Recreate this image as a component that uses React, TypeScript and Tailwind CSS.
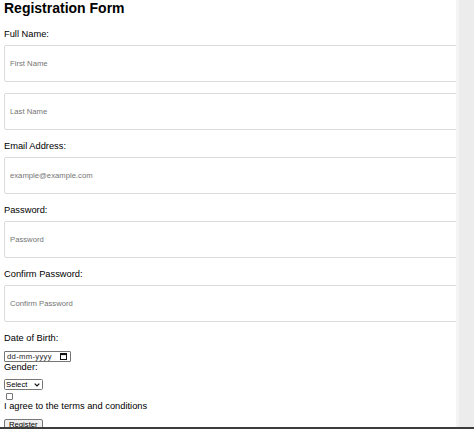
import { useState } from 'react';

const field =
  'block w-[470px] shrink-0 h-[37px] mb-[11px] pl-[5px] border border-[#dcdcdc] rounded-[2px] bg-white text-[7.7px] text-black placeholder:text-[#757575] outline-none';
const label = 'block text-[9.3px] leading-[11px] mb-[5px] text-black';

function CalendarIcon() {
  return (
    <svg width="7" height="7" viewBox="0 0 7 7" className="shrink-0">
      <rect x="0.5" y="0.5" width="6" height="6" fill="none" stroke="#111" strokeWidth="1" />
      <rect x="0.5" y="0.5" width="6" height="1.6" fill="#111" />
    </svg>
  );
}

export default function App() {
  const [agree, setAgree] = useState(false);

  return (
    <div className="w-[474px] h-[429px] flex flex-col overflow-hidden bg-white font-['Liberation_Sans',Arial,sans-serif]">
      <div className="flex h-[427px] overflow-hidden">
        <form
          className="flex-1 min-w-0 flex flex-col items-start overflow-hidden pl-[4px]"
          onSubmit={(e) => e.preventDefault()}
        >
          <h2 className="text-[14px] leading-[16px] font-bold text-black mb-[13px]">Registration Form</h2>

          <label className={label}>Full Name:</label>
          <input className={field} type="text" placeholder="First Name" />
          <input className={field} type="text" placeholder="Last Name" />

          <label className={label}>Email Address:</label>
          <input className={field} type="email" placeholder="example@example.com" />

          <label className={label}>Password:</label>
          <input className={field} type="password" placeholder="Password" />

          <label className={label}>Confirm Password:</label>
          <input className={field} type="password" placeholder="Confirm Password" />

          <label className={label}>Date of Birth:</label>
          <div className="mt-[2px] w-[67px] h-[11px] shrink-0 flex items-center justify-between pl-[2px] pr-[3px] border border-[#767676] rounded-[1px] text-[7.7px] leading-none text-[#222]">
            <span className="whitespace-nowrap tracking-[0.3px]">dd-mm-yyyy</span>
            <CalendarIcon />
          </div>

          <label className={label}>Gender:</label>
          <div className="relative mt-[1px] w-[39px] h-[11px] shrink-0">
            <select className="block w-full h-full appearance-none pl-[1px] border border-[#767676] rounded-[1.5px] bg-white text-[7.7px] leading-none text-black outline-none">
              <option>Select</option>
              <option>Male</option>
              <option>Female</option>
              <option>Other</option>
            </select>
            <svg
              width="6"
              height="4"
              viewBox="0 0 6 4"
              className="absolute right-[3px] top-[3.5px] pointer-events-none"
            >
              <path d="M0.7 0.7 L3 3 L5.3 0.7" fill="none" stroke="#111" strokeWidth="1.2" />
            </svg>
          </div>

          <input
            type="checkbox"
            checked={agree}
            onChange={(e) => setAgree(e.target.checked)}
            className="block shrink-0 appearance-none m-0 ml-[2px] mt-[3px] mb-[1px] w-[7px] h-[7px] border border-[#767676] rounded-[1px] bg-white checked:bg-[#0075ff] checked:border-[#0075ff]"
          />
          <label className={label}>I agree to the terms and conditions</label>

          <button
            type="submit"
            className="block shrink-0 mt-[2px] h-[12px] px-[4px] border border-[#767676] rounded-[2px] bg-[#efefef] text-[7.7px] leading-none text-black"
          >
            Register
          </button>
        </form>
        <div className="w-[18px] shrink-0 bg-[#ececec] border-l-[3px] border-[#f4f4f4]" />
      </div>
      <div className="h-[2px] bg-[#3c3c3c]" />
    </div>
  );
}
